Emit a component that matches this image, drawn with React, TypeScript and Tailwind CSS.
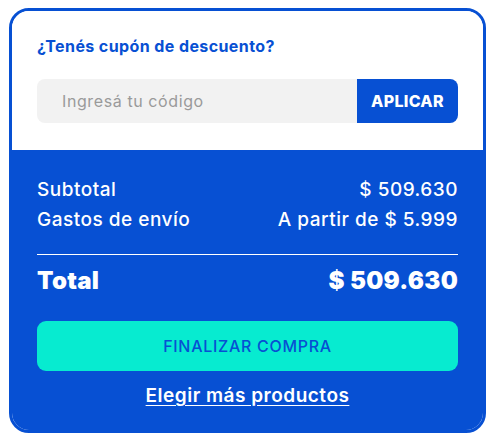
import React, { useState } from 'react';

const App: React.FC = () => {
  const [code, setCode] = useState('');

  return (
    <div className="w-[492px] h-[442px] bg-white pt-[8px] pl-[9px]" style={{ fontFamily: 'Inter, "Noto Sans", sans-serif' }}>
      <div className="w-[477px] h-[425px] rounded-[20px] border-[3px] border-[#0750d3] overflow-hidden flex flex-col">
        {/* Coupon */}
        <div className="bg-white h-[139px] px-[25px] pt-[24px]">
          <p className="text-[16px] leading-[22px] font-bold text-[#0750d3] tracking-[0.4px]">¿Tenés cupón de descuento?</p>
          <div className="mt-[22px] flex h-[44px]">
            <input
              value={code}
              onChange={(e) => setCode(e.target.value)}
              placeholder="Ingresá tu código"
              className="flex-1 min-w-0 bg-[#f2f2f2] rounded-l-[8px] pl-[25px] text-[16px] tracking-[0.6px] text-gray-700 placeholder:text-[#9a9a9a] outline-none"
            />
            <button className="w-[101px] bg-[#0750d3] rounded-r-[8px] text-white text-[16px] font-extrabold tracking-[0.3px]">
              APLICAR
            </button>
          </div>
        </div>

        {/* Summary */}
        <div className="flex-1 bg-[#0750d3] px-[25px] pt-[25px] text-white">
          <div className="flex justify-between text-[19px] leading-[30px] font-medium tracking-[0.5px]">
            <span>Subtotal</span>
            <span>$ 509.630</span>
          </div>
          <div className="flex justify-between text-[19px] leading-[30px] font-medium tracking-[0.5px]">
            <span>Gastos de envío</span>
            <span>A partir de $ 5.999</span>
          </div>
          <div className="mt-[19px] h-px bg-white" />
          <div className="mt-[11px] flex justify-between text-[24px] leading-[30px] font-black tracking-[0.3px]">
            <span>Total</span>
            <span>$ 509.630</span>
          </div>
          <button className="mt-[25px] w-full h-[50px] rounded-[9px] bg-[#07ebd0] text-[#0750d3] text-[16px] font-medium tracking-[0.7px]">
            FINALIZAR COMPRA
          </button>
          <div className="mt-[12px] text-center">
            <a href="#" className="text-[19px] leading-[26px] font-semibold tracking-[0.5px] underline underline-offset-[3px]">Elegir más productos</a>
          </div>
        </div>
      </div>
    </div>
  );
};

export default App;
